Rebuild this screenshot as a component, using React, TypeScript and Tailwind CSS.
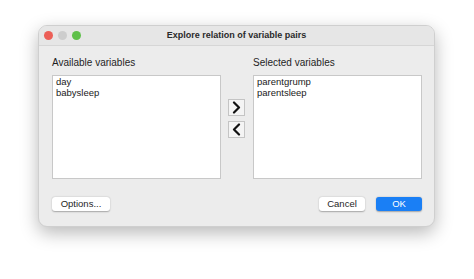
import React from "react";

function ListBox({ items }: { items: string[] }) {
  return (
    <div className="w-[169px] h-[104px] bg-white border border-[#c8c8c8] pt-0 pl-[3px]">
      {items.map((t) => (
        <div key={t} className="h-[11px] leading-[11px] text-[9.5px] text-[#1a1a1a]">
          {t}
        </div>
      ))}
    </div>
  );
}

function ArrowBtn({ dir }: { dir: "right" | "left" }) {
  return (
    <div className="w-[17px] h-[17px] bg-[#f4f4f4] border border-[#c4c4c4] flex items-center justify-center">
      <svg width="11" height="13" viewBox="0 0 11 13">
        {dir === "right" ? (
          <path d="M3 1.5 L8 6.5 L3 11.5" fill="none" stroke="#111" strokeWidth="2.2" strokeLinecap="round" strokeLinejoin="round" />
        ) : (
          <path d="M8 1.5 L3 6.5 L8 11.5" fill="none" stroke="#111" strokeWidth="2.2" strokeLinecap="round" strokeLinejoin="round" />
        )}
      </svg>
    </div>
  );
}

export default function App() {
  return (
    <div
      className="w-[474px] h-[279px] bg-white pt-[25px] pl-[38px]"
      style={{ fontFamily: '"Liberation Sans", Arial, sans-serif' }}
    >
      <div className="w-[397px] h-[202px] rounded-[9px] bg-[#ececec] border border-[#cfcfcf] shadow-[0_6px_18px_rgba(0,0,0,0.28)] overflow-hidden flex flex-col">
        <div className="h-[20px] shrink-0 bg-[#e6e6e6] border-b border-[#d6d6d6] flex items-center relative">
          <div className="flex items-center gap-[5px] pl-[5px]">
            <div className="w-[9px] h-[9px] rounded-full bg-[#ec5f57]" />
            <div className="w-[9px] h-[9px] rounded-full bg-[#cdcdcd]" />
            <div className="w-[9px] h-[9px] rounded-full bg-[#5fc04a]" />
          </div>
          <div className="absolute inset-0 flex items-center justify-center text-[9px] font-bold text-[#2a2a2a]">
            Explore relation of variable pairs
          </div>
        </div>
        <div className="flex-1 flex flex-col pl-[13px] pr-[12px] pt-[11px]">
          <div className="flex">
            <div className="flex flex-col">
              <div className="h-[12px] leading-[12px] text-[10px] text-[#1e1e1e] mb-[6px]">Available variables</div>
              <ListBox items={["day", "babysleep"]} />
            </div>
            <div className="flex flex-col gap-[5px] ml-[7px] mr-[8px] pt-[42px]">
              <ArrowBtn dir="right" />
              <ArrowBtn dir="left" />
            </div>
            <div className="flex flex-col">
              <div className="h-[12px] leading-[12px] text-[10px] text-[#1e1e1e] mb-[6px]">Selected variables</div>
              <ListBox items={["parentgrump", "parentsleep"]} />
            </div>
          </div>
          <div className="flex items-center mt-[18px]">
            <div className="w-[58px] h-[14px] bg-white rounded-[3px] shadow-[0_0.5px_1.5px_rgba(0,0,0,0.3)] flex items-center justify-center text-[9.5px] text-[#1e1e1e]">
              Options...
            </div>
            <div className="flex-1" />
            <div className="w-[46px] h-[14px] bg-white rounded-[3px] shadow-[0_0.5px_1.5px_rgba(0,0,0,0.3)] flex items-center justify-center text-[9.5px] text-[#1e1e1e]">
              Cancel
            </div>
            <div className="w-[46px] h-[14px] ml-[11px] bg-[#1a7ff5] rounded-[3px] shadow-[0_0.5px_1.5px_rgba(0,0,0,0.3)] flex items-center justify-center text-[9.5px] text-white">
              OK
            </div>
          </div>
        </div>
      </div>
    </div>
  );
}
